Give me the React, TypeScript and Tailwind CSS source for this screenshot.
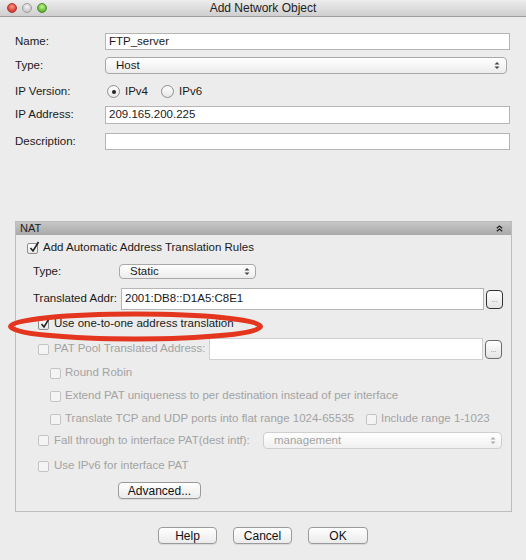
import React from "react";

const font = { fontFamily: '"Liberation Sans", Arial, sans-serif' };

function Check({ checked = false, disabled = false }: { checked?: boolean; disabled?: boolean }) {
  return (
    <span
      className={`relative inline-flex w-[11px] h-[11px] rounded-[2px] border shrink-0 ${
        disabled ? "border-[#c4c4c4] bg-[#f4f4f4]" : "border-[#8e8e8e] bg-gradient-to-b from-white to-[#e6e6e6]"
      }`}
    >
      {checked && (
        <svg className="absolute left-[1px] top-[-3px]" width="11" height="12" viewBox="0 0 11 12">
          <path d="M1.5 7 L4 10 L9.5 1" fill="none" stroke="#222" strokeWidth="1.6" />
        </svg>
      )}
    </span>
  );
}

function Arrows({ light = false }: { light?: boolean }) {
  const c = light ? "#aaa" : "#444";
  return (
    <svg width="6" height="9" viewBox="0 0 6 9" className="shrink-0">
      <path d="M0.5 3.5 L3 1 L5.5 3.5 Z" fill={c} />
      <path d="M0.5 5.5 L3 8 L5.5 5.5 Z" fill={c} />
    </svg>
  );
}

function DotsBtn({ disabled = false }: { disabled?: boolean }) {
  return (
    <div
      className={`w-[17px] h-[19px] rounded-[4px] border-[1.5px] ${
        disabled ? "border-[#6a6a6a]" : "border-[#333]"
      } bg-gradient-to-b from-white to-[#e4e4e4] flex items-center justify-center`}
    >
      <span className="text-[7px] leading-none text-[#777]">...</span>
    </div>
  );
}

function PushBtn({ children, w }: { children: React.ReactNode; w: string }) {
  return (
    <div
      className={`${w} h-[17px] rounded-[4px] border border-[#9a9a9a] bg-gradient-to-b from-white to-[#ebebeb] flex items-center justify-center text-[12px] text-[#111] shadow-[0_1px_0_rgba(0,0,0,0.08)]`}
    >
      {children}
    </div>
  );
}

export default function App() {
  return (
    <div className="relative w-[526px] h-[560px] bg-[#ececec] overflow-hidden text-[#1a1a1a] whitespace-nowrap" style={font}>
      {/* Title bar */}
      <div className="h-[17px] bg-gradient-to-b from-[#ececec] to-[#cfcfcf] border-b border-[#9e9e9e] relative flex items-center justify-center">
        <div className="absolute left-[7px] top-[3px] flex gap-[5px]">
          <span className="w-[10px] h-[10px] rounded-full bg-[radial-gradient(circle_at_50%_35%,#ff9a8a,#e0443a_60%,#b22a22)] border border-[#a83a30]" />
          <span className="w-[10px] h-[10px] rounded-full bg-[radial-gradient(circle_at_50%_35%,#f4f4f4,#c9c9c9_70%)] border border-[#9d9d9d]" />
          <span className="w-[10px] h-[10px] rounded-full bg-[radial-gradient(circle_at_50%_35%,#c8f29a,#6bbf3a_60%,#3f8f22)] border border-[#4d8c2c]" />
        </div>
        <span className="text-[12px] text-[#222] leading-none">Add Network Object</span>
      </div>

      {/* Top form */}
      <div className="pl-[15px] text-[11.5px]">
        <div className="mt-[16px] h-[17px] flex items-center">
          <span className="w-[90px] shrink-0">Name:</span>
          <div className="w-[405px] h-[17px] bg-white border border-[#b5b5b5] flex items-center pl-[3px]">FTP_server</div>
        </div>
        <div className="mt-[7px] h-[17px] flex items-center">
          <span className="w-[90px] shrink-0">Type:</span>
          <div className="w-[402px] h-[17px] rounded-[4px] bg-gradient-to-b from-white to-[#ececec] border border-[#a8a8a8] flex items-center pl-[10px] pr-[6px] justify-between">
            <span>Host</span>
            <Arrows />
          </div>
        </div>
        <div className="mt-[9px] h-[17px] flex items-center">
          <span className="w-[92px] shrink-0">IP Version:</span>
          <span className="w-[13px] h-[13px] rounded-full border border-[#8f8f8f] bg-gradient-to-b from-white to-[#e6e6e6] flex items-center justify-center">
            <span className="w-[4px] h-[4px] rounded-full bg-[#222]" />
          </span>
          <span className="ml-[5px]">IPv4</span>
          <span className="ml-[13px] w-[13px] h-[13px] rounded-full border border-[#8f8f8f] bg-gradient-to-b from-white to-[#e6e6e6]" />
          <span className="ml-[5px]">IPv6</span>
        </div>
        <div className="mt-[6px] h-[18px] flex items-center">
          <span className="w-[90px] shrink-0">IP Address:</span>
          <div className="w-[405px] h-[18px] bg-white border border-[#b5b5b5] flex items-center pl-[3px]">209.165.200.225</div>
        </div>
        <div className="mt-[9px] h-[17px] flex items-center">
          <span className="w-[90px] shrink-0">Description:</span>
          <div className="w-[405px] h-[17px] bg-white border border-[#b5b5b5]" />
        </div>
      </div>

      {/* NAT panel */}
      <div className="ml-[15px] mt-[71px] w-[497px] border border-[#bcbcbc] text-[11.5px]">
        <div className="h-[13px] bg-gradient-to-b from-[#c6c6c6] to-[#a9a9a9] flex items-center justify-between pl-[4px] pr-[8px]">
          <span className="text-[11px] leading-none text-[#222]">NAT</span>
          <svg width="7" height="7" viewBox="0 0 7 7">
            <path d="M0.8 3.3 L3.5 1 L6.2 3.3" fill="none" stroke="#222" strokeWidth="1.3" />
            <path d="M0.8 6.3 L3.5 4 L6.2 6.3" fill="none" stroke="#222" strokeWidth="1.3" />
          </svg>
        </div>
        <div className="pb-[12px]">
          <div className="mt-[6px] h-[14px] flex items-center pl-[11px]">
            <Check checked />
            <span className="ml-[5px]">Add Automatic Address Translation Rules</span>
          </div>
          <div className="mt-[9px] h-[15px] flex items-center pl-[17px]">
            <span className="w-[86px] shrink-0">Type:</span>
            <div className="w-[137px] h-[15px] rounded-[4px] bg-gradient-to-b from-white to-[#ececec] border border-[#a8a8a8] flex items-center pl-[10px] pr-[5px] justify-between">
              <span>Static</span>
              <Arrows />
            </div>
          </div>
          <div className="mt-[9px] h-[22px] flex items-center pl-[17px]">
            <span className="w-[88px] shrink-0">Translated Addr:</span>
            <div className="w-[363px] h-[22px] bg-white border border-[#b5b5b5] flex items-center pl-[3px]">2001:DB8::D1A5:C8E1</div>
            <div className="ml-[2px]">
              <DotsBtn />
            </div>
          </div>
          <div className="mt-[7px] h-[14px] flex items-center pl-[22px]">
            <Check checked />
            <span className="ml-[5px]">Use one-to-one address translation</span>
          </div>
          <div className="mt-[7px] h-[22px] flex items-center pl-[22px] text-[#a3a3a3]">
            <Check disabled />
            <span className="ml-[5px] w-[155px] shrink-0">PAT Pool Translated Address:</span>
            <div className="w-[274px] h-[22px] bg-white border border-[#d0d0d0]" />
            <div className="ml-[2px]">
              <DotsBtn disabled />
            </div>
          </div>
          <div className="mt-[6px] h-[14px] flex items-center pl-[34px] text-[#a3a3a3]">
            <Check disabled />
            <span className="ml-[4px]">Round Robin</span>
          </div>
          <div className="mt-[9px] h-[14px] flex items-center pl-[34px] text-[#a3a3a3]">
            <Check disabled />
            <span className="ml-[4px]">Extend PAT uniqueness to per destination instead of per interface</span>
          </div>
          <div className="mt-[9px] h-[14px] flex items-center pl-[34px] text-[#a3a3a3]">
            <Check disabled />
            <span className="ml-[4px] w-[301px] shrink-0">Translate TCP and UDP ports into flat range 1024-65535</span>
            <Check disabled />
            <span className="ml-[4px]">Include range 1-1023</span>
          </div>
          <div className="mt-[6px] h-[17px] flex items-center pl-[22px] text-[#a3a3a3]">
            <Check disabled />
            <span className="ml-[5px] w-[209px] shrink-0">Fall through to interface PAT(dest intf):</span>
            <div className="w-[239px] h-[17px] rounded-[4px] bg-gradient-to-b from-white to-[#f0f0f0] border border-[#cfcfcf] flex items-center pl-[10px] pr-[5px] justify-between">
              <span>management</span>
              <Arrows light />
            </div>
          </div>
          <div className="mt-[10px] h-[14px] flex items-center pl-[22px] text-[#a3a3a3]">
            <Check disabled />
            <span className="ml-[5px]">Use IPv6 for interface PAT</span>
          </div>
          <div className="mt-[9px] pl-[102px]">
            <PushBtn w="w-[83px]">Advanced...</PushBtn>
          </div>
        </div>
      </div>

      {/* Bottom buttons */}
      <div className="mt-[15px] flex pl-[158px] gap-[16px]">
        <PushBtn w="w-[59px]">Help</PushBtn>
        <PushBtn w="w-[59px]">Cancel</PushBtn>
        <PushBtn w="w-[60px]">OK</PushBtn>
      </div>

      {/* Red annotation ellipse */}
      <svg className="absolute left-0 top-0 pointer-events-none" width="526" height="560">
        <ellipse cx="135.5" cy="326.5" rx="125" ry="12.5" fill="none" stroke="#e4361f" strokeWidth="5" />
      </svg>
    </div>
  );
}
